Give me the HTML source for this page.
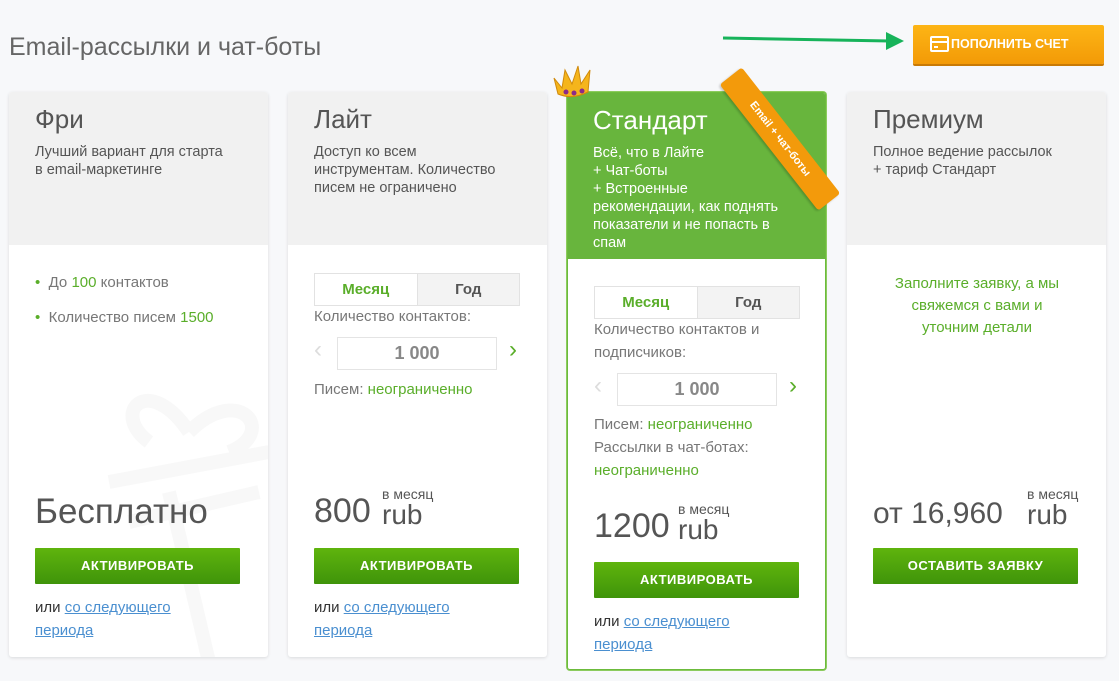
<!DOCTYPE html>
<html><head><meta charset="utf-8"><style>
*{margin:0;padding:0;box-sizing:border-box}
body{width:1119px;height:681px;background:#f7f8fa;font-family:"Liberation Sans","DejaVu Sans",sans-serif;color:#666;position:relative;overflow:hidden}
.abs{position:absolute}
h1{position:absolute;left:9px;top:33px;font-size:25px;font-weight:normal;color:#666}
.topbtn{position:absolute;left:913px;top:25px;width:191px;height:39px;background:linear-gradient(#fdb515,#f39a07);border-radius:2px;box-shadow:0 2px 0 #c97a05;color:#fff;font-weight:bold;font-size:12.5px;line-height:39px;padding-left:38px}
.card{position:absolute;top:92px;width:259px;height:565px;background:#fff;border-radius:3px;box-shadow:0 1px 3px rgba(0,0,0,.12);overflow:hidden}
.head{height:153px;background:#f1f1f1;padding:12px 26px}
.head h2{font-size:26px;font-weight:normal;color:#555;margin-bottom:8px}
.head p{font-size:14.5px;line-height:18px;color:#555}
.btn{position:absolute;left:26px;width:205px;height:36px;background:linear-gradient(#5fb40d,#3f940a);color:#fff;font-weight:bold;font-size:13px;text-align:center;line-height:36px;letter-spacing:.5px;border-radius:1px}
.or{position:absolute;left:26px;font-size:15px;line-height:23px;color:#333}
.or a{color:#4a8fd0;text-decoration:underline}
.g{color:#5aae2a}
.tog{position:absolute;left:26px;width:206px;height:33px;border:1px solid #e2e2e2;display:flex;font-weight:bold;font-size:15px}
.tog div{flex:1;text-align:center;line-height:31px}
.tog div:first-child{color:#5aae2a;background:#fff;border-right:1px solid #e2e2e2}
.tog div:last-child{background:#f3f3f3;color:#555}
.lbl{position:absolute;left:26px;font-size:15px;line-height:23px;color:#777}
.num{position:absolute;left:49px;width:160px;height:33px;border:1px solid #e4e4e4;text-align:center;line-height:31px;font-size:18px;font-weight:bold;color:#888}
.arl{position:absolute;left:26px;font-size:24px;color:#ddd}
.arr{position:absolute;left:221px;font-size:24px;color:#5aae2a}
.price{position:absolute;left:26px;color:#555;font-size:34px}
.per{position:absolute;font-size:14px;color:#555}
</style></head><body>
<h1>Email-рассылки и чат-боты</h1>
<svg class="abs" style="left:720px;top:30px" width="185" height="22"><line x1="3" y1="8" x2="170" y2="11" stroke="#17b35a" stroke-width="3"/><path d="M166 2 L184 11 L166 20 Z" fill="#17b35a"/></svg>
<div class="topbtn"><svg class="abs" style="left:17px;top:11px" width="19" height="16"><rect x="1" y="1" width="17" height="14" rx="1" fill="none" stroke="#fff" stroke-width="2"/><rect x="1" y="5" width="17" height="2" fill="#fff"/><rect x="4" y="10" width="4" height="2" fill="#fff"/></svg>ПОПОЛНИТЬ СЧЕТ</div>

<div class="card" style="left:9px">
<div class="head"><h2>Фри</h2><p>Лучший вариант для старта<br>в email-маркетинге</p></div>
<svg class="abs" style="left:80px;top:280px" width="180" height="290" opacity=".025"><g fill="none" stroke="#000" stroke-width="14"><path d="M100 60 C60 0 20 40 60 70 M100 60 C150 10 190 60 140 80"/><path d="M20 110 L180 80 M40 150 L170 120 M80 120 L120 290"/></g></svg>
<div class="abs" style="left:26px;top:180px;width:200px;font-size:15px;line-height:22px;color:#777">
<div style="margin-bottom:13px"><span class="g">•</span>&nbsp; До <span class="g">100</span> контактов</div>
<div style="padding-left:21px;text-indent:-21px;width:190px"><span class="g">•</span>&nbsp; Количество писем <span class="g">1500</span></div></div>
<div class="price" style="top:400px;font-size:35px">Бесплатно</div>
<div class="btn" style="top:456px">АКТИВИРОВАТЬ</div>
<div class="or" style="top:504px">или <a>со следующего<br>периода</a></div>
</div>

<div class="card" style="left:288px">
<div class="head"><h2>Лайт</h2><p>Доступ ко всем<br>инструментам. Количество<br>писем не ограничено</p></div>
<div class="tog" style="top:181px"><div>Месяц</div><div>Год</div></div>
<div class="lbl" style="top:213px">Количество контактов:</div>
<div class="arl" style="top:244px">‹</div><div class="num" style="top:245px">1 000</div><div class="arr" style="top:244px">›</div>
<div class="lbl" style="top:286px">Писем: <span class="g">неограниченно</span></div>
<div class="price" style="top:400px">800</div><div class="per" style="left:94px;top:396px;line-height:13px">в месяц<br><span style="font-size:28px;line-height:28px">rub</span></div>
<div class="btn" style="top:456px">АКТИВИРОВАТЬ</div>
<div class="or" style="top:504px">или <a>со следующего<br>периода</a></div>
</div>

<div class="card" style="left:567px;height:578px;border:1px solid #6cbb3c;box-shadow:0 0 0 1px #8ccb5e">
<div class="head" style="height:166px;background:#68b53d;padding-left:25px"><h2 style="color:#fff">Стандарт</h2><p style="color:#fff">Всё, что в Лайте<br>+ Чат-боты<br>+ Встроенные<br>рекомендации, как поднять<br>показатели и не попасть в<br>спам</p></div>
<div class="tog" style="top:193px"><div>Месяц</div><div>Год</div></div>
<div class="lbl" style="top:225px">Количество контактов и<br>подписчиков:</div>
<div class="arl" style="top:279px">‹</div><div class="num" style="top:280px">1 000</div><div class="arr" style="top:279px">›</div>
<div class="lbl" style="top:320px">Писем: <span class="g">неограниченно</span><br>Рассылки в чат-ботах:<br><span class="g">неограниченно</span></div>
<div class="price" style="top:414px">1200</div><div class="per" style="left:110px;top:410px;line-height:13px">в месяц<br><span style="font-size:28px;line-height:28px">rub</span></div>
<div class="btn" style="top:469px">АКТИВИРОВАТЬ</div>
<div class="or" style="top:517px">или <a>со следующего<br>периода</a></div>
</div>
<div class="abs" style="left:700px;top:125px;width:160px;height:28px;background:#f39a0b;transform:rotate(52deg);color:#fff;font-size:11px;font-weight:bold;text-align:center;line-height:28px;box-shadow:0 2px 2px rgba(0,0,0,.2);border-radius:3px">Email + чат-боты</div>
<svg class="abs" style="left:550px;top:58px" width="44" height="42"><path d="M4 20 L12 30 L15 12 L22 26 L28 8 L31 26 L40 12 L38 34 Q22 42 8 36 Z" fill="#f5b51c" stroke="#d08a0c"/><circle cx="16" cy="34" r="2.5" fill="#8a2a8a"/><circle cx="24" cy="35" r="2.5" fill="#8a2a8a"/><circle cx="32" cy="33" r="2.5" fill="#8a2a8a"/></svg>

<div class="card" style="left:847px">
<div class="head"><h2>Премиум</h2><p>Полное ведение рассылок<br>+ тариф Стандарт</p></div>
<div class="abs g" style="left:30px;width:200px;top:181px;text-align:center;font-size:15px;line-height:22px">Заполните заявку, а мы<br>свяжемся с вами и<br>уточним детали</div>
<div class="price" style="top:405px;font-size:30px">от 16,960</div><div class="per" style="left:180px;top:396px;line-height:13px">в месяц<br><span style="font-size:28px;line-height:28px">rub</span></div>
<div class="btn" style="top:456px">ОСТАВИТЬ ЗАЯВКУ</div>
</div>
</body></html>
